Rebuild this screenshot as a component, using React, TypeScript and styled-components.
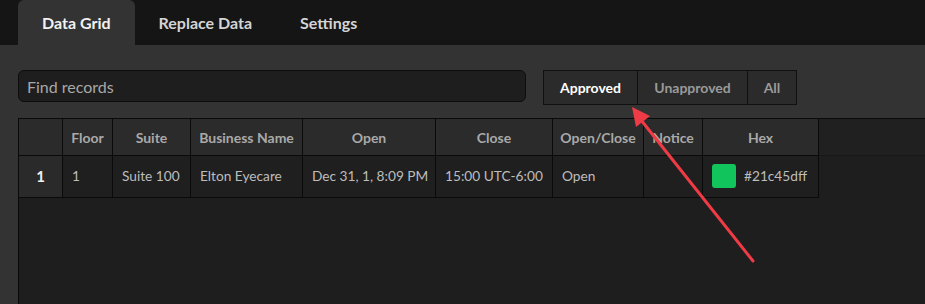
import styled, { createGlobalStyle } from 'styled-components'

const GlobalStyle = createGlobalStyle`
    html, body {
        margin: 0;
        padding: 0;
        background: #333333;
        font-family: Lato, "Open Sans", sans-serif;
    }
`

const Page = styled.div`
    position: relative;
    width: 925px;
    height: 304px;
    overflow: hidden;
    display: flex;
    flex-direction: column;
    background: #333333;
`

const TabBar = styled.div`
    display: flex;
    height: 45px;
    padding-left: 18px;
    background: #151515;
    flex-shrink: 0;
`

const Tab = styled.div<{ $active?: boolean }>`
    display: flex;
    align-items: center;
    padding: 0 24px;
    font-size: 16px;
    font-weight: 700;
    color: ${p => (p.$active ? '#f2f2f2' : '#d4d4d4')};
    background: ${p => (p.$active ? '#333333' : 'transparent')};
    border-radius: 6px 6px 0 0;
`

const Content = styled.div`
    flex: 1;
    display: flex;
    flex-direction: column;
    padding: 25px 0 0 18px;
    min-height: 0;
`

const Toolbar = styled.div`
    display: flex;
    align-items: flex-start;
    gap: 17px;
    margin-bottom: 13px;
`

const Search = styled.input`
    box-sizing: border-box;
    width: 508px;
    height: 32px;
    padding: 0 8px;
    background: #1e1e1e;
    border: 1px solid #0d0d0d;
    border-radius: 6px;
    color: #ddd;
    font-family: Lato, sans-serif;
    font-size: 16px;
    outline: none;
    &::placeholder {
        color: #a8a8a8;
    }
`

const ButtonGroup = styled.div`
    display: flex;
    height: 35px;
    border: 1px solid #101010;
    box-sizing: border-box;
`

const FilterButton = styled.div<{ $active?: boolean; $w: number }>`
    width: ${p => p.$w}px;
    display: flex;
    align-items: center;
    justify-content: center;
    background: #2b2b2b;
    font-size: 14px;
    font-weight: 700;
    color: ${p => (p.$active ? '#ffffff' : '#9a9a9a')};
    & + & {
        border-left: 1px solid #101010;
    }
`

const Grid = styled.div`
    flex: 1;
    background: #1e1e1e;
    border-top: 1px solid #0a0a0a;
    border-left: 1px solid #0a0a0a;
    min-height: 0;
`

const cols = '44px 50px 78px 112px 133px 117px 91px 59px 116px 1fr'

const HeaderRow = styled.div`
    display: grid;
    grid-template-columns: ${cols};
    height: 36px;
    background: #202020;
    border-bottom: 1px solid #181818;
`

const HeadCell = styled.div`
    display: flex;
    align-items: center;
    justify-content: center;
    background: #2b2b2b;
    border-right: 1px solid #0a0a0a;
    border-bottom: 1px solid #0a0a0a;
    margin-bottom: -1px;
    font-size: 14px;
    font-weight: 700;
    color: #a9a9a9;
    white-space: nowrap;
`

const Filler = styled.div``

const DataRow = styled.div`
    display: grid;
    grid-template-columns: ${cols};
    height: 42px;
`

const Cell = styled.div<{ $index?: boolean }>`
    display: flex;
    align-items: center;
    justify-content: ${p => (p.$index ? 'center' : 'flex-start')};
    gap: 8px;
    padding: 0 ${p => (p.$index ? 0 : 9)}px;
    background: ${p => (p.$index ? '#2a2a2a' : '#1f1f1f')};
    border-right: 1px solid #0a0a0a;
    border-bottom: 1px solid #0a0a0a;
    font-size: ${p => (p.$index ? 15 : 13.7)}px;
    font-weight: ${p => (p.$index ? 700 : 400)};
    color: ${p => (p.$index ? '#f0f0f0' : '#bdbdbd')};
    white-space: nowrap;
    padding-bottom: 2px;
`

const Swatch = styled.span<{ $color: string }>`
    width: 24px;
    height: 24px;
    border-radius: 3px;
    background: ${p => p.$color};
    flex-shrink: 0;
`

const Annotation = styled.svg`
    position: absolute;
    left: 0;
    top: 0;
    pointer-events: none;
`

const headers = ['', 'Floor', 'Suite', 'Business Name', 'Open', 'Close', 'Open/Close', 'Notice', 'Hex']

export default function App() {
    return (
        <>
            <GlobalStyle />
            <Page>
                <TabBar>
                    <Tab $active>Data Grid</Tab>
                    <Tab>Replace Data</Tab>
                    <Tab>Settings</Tab>
                </TabBar>
                <Content>
                    <Toolbar>
                        <Search placeholder="Find records" />
                        <ButtonGroup>
                            <FilterButton $active $w={93}>Approved</FilterButton>
                            <FilterButton $w={109}>Unapproved</FilterButton>
                            <FilterButton $w={48}>All</FilterButton>
                        </ButtonGroup>
                    </Toolbar>
                    <Grid>
                        <HeaderRow>
                            {headers.map((h, i) => (
                                <HeadCell key={i}>{h}</HeadCell>
                            ))}
                            <Filler />
                        </HeaderRow>
                        <DataRow>
                            <Cell $index>1</Cell>
                            <Cell>1</Cell>
                            <Cell>Suite 100</Cell>
                            <Cell>Elton Eyecare</Cell>
                            <Cell>Dec 31, 1, 8:09 PM</Cell>
                            <Cell>15:00 UTC-6:00</Cell>
                            <Cell>Open</Cell>
                            <Cell />
                            <Cell>
                                <Swatch $color="#12c45c" />
                                #21c45dff
                            </Cell>
                        </DataRow>
                    </Grid>
                </Content>
                <Annotation width="925" height="304" viewBox="0 0 925 304">
                    <line x1="753" y1="261" x2="641" y2="120" stroke="#ef3b46" strokeWidth="3" strokeLinecap="round" />
                    <polygon points="632,107 650,116 636,127" fill="#ef3b46" />
                </Annotation>
            </Page>
        </>
    )
}
